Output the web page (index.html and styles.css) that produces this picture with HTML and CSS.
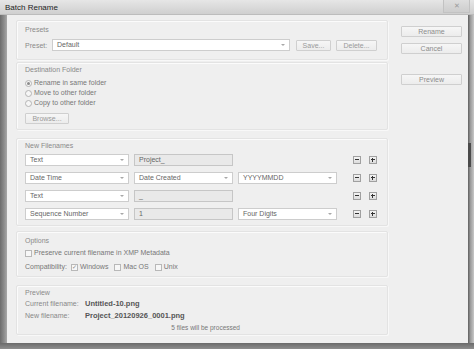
FILE: index.html
```html
<!DOCTYPE html>
<html lang="en">
<head>
  <meta charset="UTF-8">
  <title>Batch Rename</title>
  <link rel="stylesheet" href="styles.css">
</head>
<body>
  <div class="window">
    <div class="titlebar">
      <span class="title">Batch Rename</span>
      <span class="close">&#10005;</span>
    </div>
    <div class="frame">
      <div class="frame-left"></div>
      <div class="dialog">
        <div class="panels">
          <div class="panel presets">
            <div class="legend">Presets</div>
            <div class="row">
              <span class="lbl">Preset:</span>
              <div class="select preset-select">Default</div>
              <button class="btn save">Save...</button>
              <button class="btn delete">Delete...</button>
            </div>
          </div>

          <div class="panel destination">
            <div class="legend">Destination Folder</div>
            <div class="opt"><span class="radio on"></span><span>Rename in same folder</span></div>
            <div class="opt"><span class="radio"></span><span>Move to other folder</span></div>
            <div class="opt"><span class="radio"></span><span>Copy to other folder</span></div>
            <button class="btn browse">Browse...</button>
          </div>

          <div class="panel filenames">
            <div class="legend">New Filenames</div>
            <div class="name-row">
              <div class="select col1">Text</div>
              <div class="field col2">Project_</div>
              <div class="spacer"></div>
              <span class="minus"></span><span class="plus"></span>
            </div>
            <div class="name-row">
              <div class="select col1">Date Time</div>
              <div class="select col2 white">Date Created</div>
              <div class="select col3">YYYYMMDD</div>
              <span class="minus"></span><span class="plus"></span>
            </div>
            <div class="name-row">
              <div class="select col1">Text</div>
              <div class="field col2">_</div>
              <div class="spacer"></div>
              <span class="minus"></span><span class="plus"></span>
            </div>
            <div class="name-row">
              <div class="select col1">Sequence Number</div>
              <div class="field col2">1</div>
              <div class="select col3">Four Digits</div>
              <span class="minus"></span><span class="plus"></span>
            </div>
          </div>

          <div class="panel options">
            <div class="legend">Options</div>
            <div class="opt"><span class="check"></span><span>Preserve current filename in XMP Metadata</span></div>
            <div class="opt compat">
              <span class="compat-lbl">Compatibility:</span>
              <span class="check on">&#10003;</span><span>Windows</span>
              <span class="check gap"></span><span>Mac OS</span>
              <span class="check gap"></span><span>Unix</span>
            </div>
          </div>

          <div class="panel preview">
            <div class="legend">Preview</div>
            <div class="info"><span class="key">Current filename:</span><b>Untitled-10.png</b></div>
            <div class="info"><span class="key">New filename:</span><b>Project_20120926_0001.png</b></div>
            <div class="count">5 files will be processed</div>
          </div>
        </div>

        <div class="side">
          <button class="btn side-btn">Rename</button>
          <button class="btn side-btn">Cancel</button>
          <button class="btn side-btn preview-btn">Preview</button>
        </div>
      </div>
      <div class="frame-right"><div class="thumb"></div></div>
    </div>
    <div class="frame-bottom"></div>
  </div>
</body>
</html>
```

FILE: styles.css
```css
body {
  margin: 0;
  background-color: #777777;
  font-family: "Liberation Sans", Arial, sans-serif;
  font-size: 7px;
  color: #666666;
}

.window {
  width: 474px;
  height: 349px;
  display: flex;
  flex-direction: column;
  overflow: hidden;
}

.titlebar {
  height: 15px;
  display: flex;
  justify-content: space-between;
  align-items: center;
  padding-left: 5px;
  background: linear-gradient(#e6e6e6, #cfcfcf);
  border-bottom: 1px solid #bcbcbc;
  box-sizing: border-box;
}

.title {
  font-size: 8px;
  color: #1e1e1e;
}

.close {
  align-self: flex-start;
  width: 27px;
  height: 13px;
  margin-right: 4px;
  line-height: 12px;
  text-align: center;
  font-size: 7px;
  color: #9a9a9a;
  background: linear-gradient(#dedede, #cdcdcd);
  border: 1px solid #c2c2c2;
  border-top: none;
  box-sizing: border-box;
}

.frame {
  flex: 1;
  display: flex;
}

.frame-left {
  width: 7px;
  background: linear-gradient(to right, #6c6c6c, #8d8d8d 60%, #a8a8a8);
}

.frame-right {
  width: 6px;
  background: linear-gradient(to right, #5e5e5e, #9a9a9a 40%, #c8c8c8);
  position: relative;
}

.thumb {
  position: absolute;
  top: 128px;
  left: 0;
  width: 3px;
  height: 24px;
  background-color: #4a4a4a;
}

.frame-bottom {
  height: 6px;
  background: linear-gradient(#6a6a6a, #8e8e8e);
}

.dialog {
  flex: 1;
  display: flex;
  background-color: #efefef;
  padding: 5px 0 0 9px;
}

.panels {
  width: 372px;
  display: flex;
  flex-direction: column;
}

.panel {
  box-sizing: border-box;
  border: 1px solid #e3e3e3;
  border-radius: 2px;
  box-shadow: inset 1px 1px 0 #fbfbfb, 1px 1px 0 #f8f8f8;
  padding-left: 8px;
  padding-right: 8px;
}

.legend {
  height: 10px;
  line-height: 10px;
  color: #8a8a8a;
}

.presets {
  height: 40px;
  padding-top: 4px;
}

.destination {
  height: 68px;
  margin-top: 2px;
  padding-top: 2px;
}

.filenames {
  height: 88px;
  margin-top: 8px;
  padding-top: 2px;
}

.options {
  height: 46px;
  margin-top: 5px;
  padding-top: 4px;
}

.preview {
  height: 50px;
  margin-top: 8px;
  padding-top: 2px;
}

.row {
  display: flex;
  align-items: center;
  margin-top: 4px;
  height: 12px;
}

.lbl {
  width: 27px;
  color: #8a8a8a;
}

.select,
.field {
  box-sizing: border-box;
  height: 12px;
  line-height: 10px;
  padding-left: 4px;
  border: 1px solid #cdcdcd;
  background-color: #ffffff;
  color: #666666;
  position: relative;
  white-space: nowrap;
}

.select::after {
  content: "";
  position: absolute;
  right: 4px;
  top: 4px;
  border-left: 2px solid transparent;
  border-right: 2px solid transparent;
  border-top: 2px solid #a8a8a8;
}

.field {
  background-color: #e9e9e9;
  border-color: #c6c6c6;
}

.preset-select {
  width: 238px;
}

.btn {
  box-sizing: border-box;
  font-family: inherit;
  font-size: 7px;
  color: #9a9a9a;
  background: linear-gradient(#f6f6f6, #ececec);
  border: 1px solid #cfcfcf;
  border-radius: 1px;
  padding: 0;
  height: 11px;
  line-height: 9px;
}

.save {
  width: 35px;
  margin-left: 6px;
}

.delete {
  width: 41px;
  margin-left: 5px;
}

.opt {
  height: 10px;
  line-height: 10px;
  display: flex;
  align-items: center;
  color: #777777;
  white-space: nowrap;
}

.radio {
  width: 5px;
  height: 5px;
  border: 1px solid #b4b4b4;
  border-radius: 50%;
  background-color: #f6f6f6;
  margin-right: 2px;
  position: relative;
}

.radio.on::after {
  content: "";
  position: absolute;
  left: 1px;
  top: 1px;
  width: 3px;
  height: 3px;
  border-radius: 50%;
  background-color: #8a8a8a;
}

.destination .opt:nth-of-type(2) {
  margin-top: 3px;
}

.browse {
  width: 44px;
  margin-top: 5px;
}

.name-row {
  display: flex;
  align-items: center;
  height: 12px;
  margin-top: 6px;
}

.filenames .legend + .name-row {
  margin-top: 3px;
}

.col1 {
  width: 104px;
}

.col2 {
  width: 99px;
  margin-left: 5px;
}

.col2.white {
  background-color: #ffffff;
  border-color: #cdcdcd;
}

.col3 {
  width: 99px;
  margin-left: 5px;
}

.spacer {
  width: 99px;
  margin-left: 5px;
}

.minus,
.plus {
  box-sizing: border-box;
  width: 8px;
  height: 8px;
  border: 1px solid #a0a0a0;
  background: linear-gradient(#f4f4f4, #dcdcdc);
  position: relative;
}

.minus {
  margin-left: 16px;
}

.plus {
  margin-left: 8px;
}

.minus::before,
.plus::before {
  content: "";
  position: absolute;
  left: 1px;
  top: 2px;
  width: 4px;
  height: 1px;
  background-color: #333333;
}

.plus::after {
  content: "";
  position: absolute;
  left: 2px;
  top: 1px;
  width: 1px;
  height: 4px;
  background-color: #333333;
}

.options .legend + .opt {
  margin-top: 2px;
}

.compat {
  margin-top: 4px;
}

.compat-lbl {
  margin-right: 4px;
  color: #777777;
}

.check {
  box-sizing: border-box;
  flex: none;
  width: 7px;
  height: 7px;
  border: 1px solid #b8b8b8;
  background-color: #f7f7f7;
  margin-right: 2px;
  font-size: 6px;
  line-height: 5px;
  text-align: center;
  color: #888888;
}

.check.gap {
  margin-left: 6px;
}

.info {
  height: 12px;
  line-height: 12px;
  display: flex;
  color: #888888;
}

.key {
  width: 60px;
}

.info b {
  font-size: 7.5px;
  color: #555555;
}

.count {
  width: 215px;
  text-align: right;
  font-size: 6.5px;
  line-height: 12px;
  color: #777777;
}

.side {
  display: flex;
  flex-direction: column;
  margin-left: 13px;
  padding-top: 6px;
}

.side-btn {
  width: 61px;
  height: 11px;
  margin-bottom: 6px;
  color: #8c8c8c;
}

.preview-btn {
  margin-top: 14px;
}
```
